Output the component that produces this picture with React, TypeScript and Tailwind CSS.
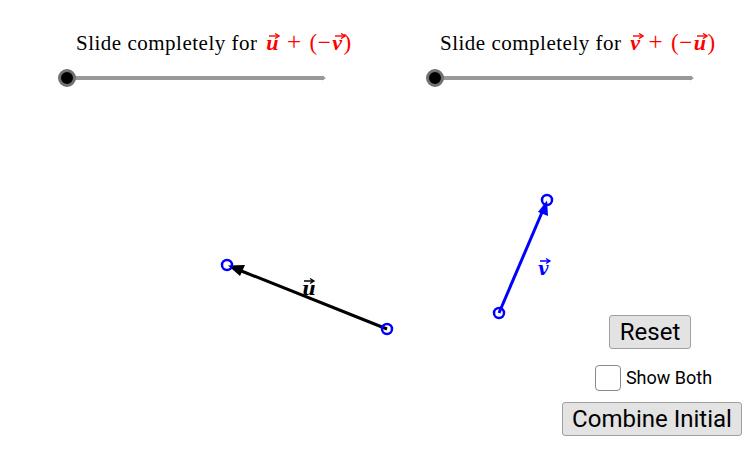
import React from 'react';

const serif = { fontFamily: '"DejaVu Serif", "Liberation Serif", serif' };

function Vec({ name, color }: { name: string; color: string }) {
  return (
    <span className="relative inline-block font-bold italic" style={{ color }}>
      {name}
      <svg
        className="absolute left-[3px] top-[5px]"
        width="11"
        height="6"
        viewBox="0 0 11 6"
      >
        <path d="M0 3 H9" stroke={color} strokeWidth="1.4" />
        <path d="M6 0.5 L10 3 L6 5.5" fill="none" stroke={color} strokeWidth="1.4" />
      </svg>
    </span>
  );
}

function Slider({ a, b, labelClass }: { a: string; b: string; labelClass: string }) {
  return (
    <div className="w-[368px] shrink-0 flex flex-col">
      <div
        className={`${labelClass} h-[30px] text-[21px] leading-[30px] tracking-[0.5px] text-black whitespace-nowrap`}
        style={{ fontFamily: '"Liberation Serif", serif' }}
      >
        Slide completely for{' '}
        <span className="ml-[3px] text-[#ff0000]">
          <span className="text-[22px]"><Vec name={a} color="#ff0000" /></span>
          <span className="mx-[8px] text-[25px]">+</span>
          <span className="text-[23px]">(</span>
          <span className="text-[23px] mr-[1px]">−</span>
          <span className="text-[22px]"><Vec name={b} color="#ff0000" /></span>
          <span className="text-[23px] ml-[1px]">)</span>
        </span>
      </div>
      <div className="relative mt-[12px] w-[270px] h-[18px] flex items-center">
        <div className="ml-[8px] h-[4px] w-[258px] bg-[#999999]" />
        <svg className="absolute left-[264px] top-[5px]" width="8" height="8" viewBox="0 0 8 8">
          <path d="M0 1.5 L4 4 L0 6.5 Z" fill="#999999" />
        </svg>
        <div className="absolute left-0 top-0 w-[18px] h-[18px] rounded-full bg-black border-[3px] border-[#707070]" />
      </div>
    </div>
  );
}

export default function App() {
  return (
    <div className="relative w-[750px] h-[450px] bg-white overflow-hidden" style={{ fontFamily: 'Roboto, sans-serif' }}>
      <svg className="absolute inset-0" width="750" height="450">
        {/* vector u */}
        <line x1="387" y1="329" x2="239" y2="270" stroke="#000" strokeWidth="3" />
        <path d="M228 265.5 L245 265 L240 276 Z" fill="#000" />
        {/* vector v */}
        <line x1="499" y1="313" x2="543" y2="210" stroke="#0000ff" strokeWidth="3" />
        <path d="M547 200.5 L548 216 L538 212 Z" fill="#0000ff" />
        <g fill="none" stroke="#0000ff" strokeWidth="2.5">
          <circle cx="227" cy="265" r="5" />
          <circle cx="387" cy="329" r="5" />
          <circle cx="499" cy="313" r="5" />
          <circle cx="547" cy="200" r="5" />
        </g>
        <text x="302" y="295" fontSize="19" fontWeight="bold" fontStyle="italic" fill="#000" style={serif}>u</text>
        <path d="M304 281 H313 M310 278.5 L314 281 L310 283.5" stroke="#000" strokeWidth="1.3" fill="none" />
        <text x="538" y="275" fontSize="18" fontWeight="bold" fontStyle="italic" fill="#0000ff" style={serif}>v</text>
        <path d="M540 261 H549 M546 258.5 L550 261 L546 263.5" stroke="#0000ff" strokeWidth="1.3" fill="none" />
      </svg>

      <div className="relative flex pl-[58px] pt-[27px]">
        <Slider a="u" b="v" labelClass="ml-[18px]" />
        <Slider a="v" b="u" labelClass="ml-[14px]" />
      </div>

      <div className="relative flex justify-end pr-[8px] mt-[228px]">
        <div className="w-[180px] flex flex-col items-center">
          <button className="ml-[-4px] h-[34px] w-[82px] rounded-[3px] border border-[#a0a0a0] bg-[#e3e3e3] text-[24px] text-black leading-none">
            Reset
          </button>
          <label className="mt-[15px] ml-[3px] flex items-center gap-[5px]">
            <span className="w-[26px] h-[26px] rounded-[4px] border border-[#8a8a8a] bg-white" />
            <span className="text-[18px] text-black">Show Both</span>
          </label>
          <button className="mt-[11px] h-[34px] w-[180px] rounded-[3px] border border-[#a0a0a0] bg-[#e3e3e3] text-[24px] text-black leading-none">
            Combine Initial
          </button>
        </div>
      </div>
    </div>
  );
}
